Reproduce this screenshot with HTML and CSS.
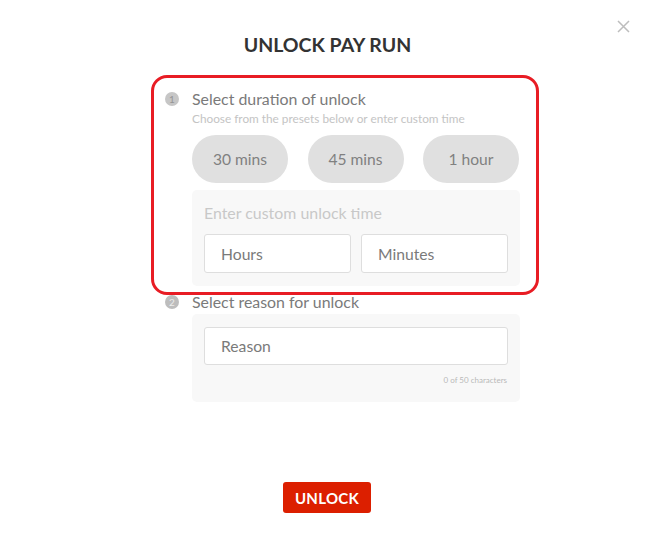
FILE: index.html
```html
<!DOCTYPE html>
<html>
<head>
<meta charset="utf-8">
<link rel="stylesheet" href="styles.css">
</head>
<body>
<div class="modal">
  <button class="close" aria-label="Close">
    <svg width="13" height="13" viewBox="0 0 13 13"><path d="M1 1L12 12M12 1L1 12" stroke="#bdbdbd" stroke-width="1.5" fill="none"/></svg>
  </button>
  <h1 class="title">UNLOCK PAY RUN</h1>
  <div class="steps">
    <div class="step-head">
      <span class="num num-1">1</span>
      <span class="step-label">Select duration of unlock</span>
    </div>
    <div class="step-body">
      <p class="hint">Choose from the presets below or enter custom time</p>
      <div class="presets">
        <button class="pill">30 mins</button>
        <button class="pill">45 mins</button>
        <button class="pill">1 hour</button>
      </div>
      <div class="panel panel-custom">
        <div class="panel-label">Enter custom unlock time</div>
        <div class="fields">
          <input class="field" placeholder="Hours">
          <input class="field" placeholder="Minutes">
        </div>
      </div>
    </div>
    <div class="step-head step-head-2">
      <span class="num num-2">2</span>
      <span class="step-label">Select reason for unlock</span>
    </div>
    <div class="step-body">
      <div class="panel panel-reason">
        <input class="field field-wide" placeholder="Reason">
        <div class="counter">0 of 50 characters</div>
      </div>
    </div>
  </div>
  <div class="actions">
    <button class="unlock">UNLOCK</button>
  </div>
  <div class="highlight"></div>
</div>
</body>
</html>
```
FILE: styles.css
```css
* { box-sizing: border-box; }
html, body { margin: 0; padding: 0; background: #fff; }
body {
  font-family: Lato, "Open Sans", sans-serif;
  width: 655px;
  height: 544px;
  overflow: hidden;
}
.modal {
  position: relative;
  width: 655px;
  height: 544px;
  padding-top: 33px;
}
.close {
  position: absolute;
  left: 617px;
  top: 20px;
  width: 13px;
  height: 13px;
  padding: 0;
  border: 0;
  background: none;
  display: block;
}
.close svg { display: block; }
.title {
  margin: 0;
  text-align: center;
  font-size: 19.5px;
  line-height: 24px;
  font-weight: 700;
  color: #333;
}
.steps {
  margin: 33px 0 0 165px;
  width: 355px;
}
.step-head {
  display: flex;
  align-items: center;
  height: 18px;
}
.step-head-2 { margin-top: 7px; }
.num {
  width: 14px;
  height: 14px;
  border-radius: 50%;
  font-size: 10px;
  line-height: 14px;
  text-align: center;
  margin-right: 13px;
  flex: none;
}
.num-1 { background: #c6c6c6; color: #959595; }
.num-2 { background: #bdbdbd; color: #ececec; }
.step-label {
  font-size: 15.9px;
  line-height: 18px;
  color: #7a7a7a;
}
.step-body { margin-left: 27px; width: 328px; }
.hint {
  margin: 4px 0 0;
  font-size: 11.8px;
  line-height: 13px;
  color: #c4c4c4;
}
.presets {
  display: flex;
  justify-content: space-between;
  margin-top: 10px;
  padding-right: 1px;
}
.pill {
  width: 96px;
  height: 48px;
  border: 0;
  border-radius: 24px;
  background: #e0e0e0;
  color: #808080;
  font-family: inherit;
  font-size: 15.6px;
  padding: 0;
}
.panel {
  background: #f8f8f8;
  border-radius: 5px;
}
.panel-custom {
  margin-top: 7px;
  padding: 14px 13px 13px 12px;
}
.panel-label {
  font-size: 15.9px;
  line-height: 18px;
  color: #c8c8c8;
}
.fields {
  display: flex;
  gap: 10px;
  margin-top: 12px;
}
.field {
  width: 147px;
  height: 39px;
  border: 1px solid #dedede;
  border-radius: 3px;
  background: #fff;
  padding: 0 16px;
  font-family: inherit;
  font-size: 15.7px;
  color: #777;
  outline: none;
}
.field::placeholder { color: #7a7a7a; }
.panel-reason {
  margin-top: 3px;
  padding: 13px 12px 17px 12px;
}
.field-wide { width: 304px; height: 38px; }
.counter {
  margin-top: 10px;
  text-align: right;
  font-size: 8px;
  line-height: 10px;
  color: #b8b8b8;
  padding-right: 1px;
}
.actions {
  display: flex;
  justify-content: center;
  margin-top: 80px;
  padding-right: 1px;
}
.unlock {
  width: 88px;
  height: 31px;
  border: 0;
  border-radius: 3px;
  background: #dc1f00;
  color: #fff;
  font-family: inherit;
  font-size: 15px;
  font-weight: 700;
  letter-spacing: 0.3px;
  padding: 0;
}
.highlight {
  position: absolute;
  left: 151px;
  top: 75px;
  width: 388px;
  height: 220px;
  border: 3px solid #e81c24;
  border-radius: 16px;
  pointer-events: none;
}
```
